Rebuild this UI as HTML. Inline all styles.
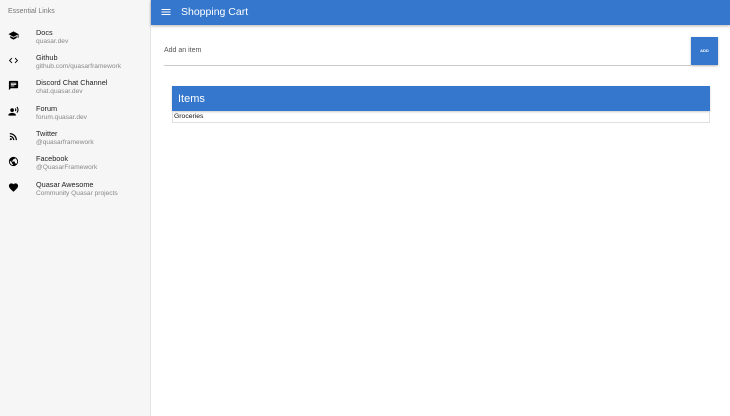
<!DOCTYPE html>
<html><head><style>
*{margin:0;padding:0;box-sizing:border-box}
body{width:730px;height:416px;overflow:hidden;font-family:"Liberation Sans",sans-serif;background:#fff;position:relative}
.side{position:absolute;left:0;top:0;width:151px;height:416px;background:#f6f6f6;border-right:1px solid #e4e4e4}
.hdr{position:absolute;left:8px;top:8px;font-size:7px;color:#777}
.it{position:absolute;left:0;height:25px;width:151px}
.it svg{position:absolute;left:8px;top:2px;width:11px;height:11px}
.t1{position:absolute;left:36px;top:0;font-size:7.3px;color:#222}
.t2{position:absolute;left:36px;top:10px;font-size:6.6px;color:#888}
.bar{position:absolute;left:151px;top:0;width:579px;height:25px;background:#3577cc;box-shadow:0 1px 3px rgba(0,0,0,.3)}
.bar .tt{position:absolute;left:30px;top:6px;color:#fff;font-size:10.5px}
.inp{position:absolute;left:164px;top:65px;width:527px;border-bottom:1px solid #ccc}
.ph{position:absolute;left:164px;top:47px;font-size:7px;color:#555}
.btn{position:absolute;left:691px;top:37px;width:27px;height:28px;background:#3577cc;box-shadow:0 1px 2px rgba(0,0,0,.3);color:#fff;font-size:4px;text-align:center;line-height:28px;font-weight:bold}
.ih{position:absolute;left:172px;top:86px;width:538px;height:25px;background:#3577cc;color:#fff;font-size:11px;padding:7px 6px;box-shadow:0 1px 2px rgba(0,0,0,.2)}
.row{position:absolute;left:172px;top:111px;width:538px;height:12px;border:1px solid #e0e0e0;border-top:none;font-size:6.8px;padding:2px 1px 0;color:#111}
</style></head><body>
<div class="side">
<div class="hdr">Essential Links</div>
<div class="it" style="top:28px"><svg viewBox="0 0 24 24"><path d="M5 13.2v4L12 21l7-3.8v-4L12 17l-7-3.8zM12 3 1 9l11 6 9-4.9V17h2V9L12 3z"/></svg><div class="t1">Docs</div><div class="t2">quasar.dev</div></div>
<div class="it" style="top:53px"><svg viewBox="0 0 24 24"><path d="M9.4 16.6 4.8 12l4.6-4.6L8 6l-6 6 6 6 1.4-1.4zm5.2 0 4.6-4.6-4.6-4.6L16 6l6 6-6 6-1.4-1.4z"/></svg><div class="t1">Github</div><div class="t2">github.com/quasarframework</div></div>
<div class="it" style="top:78px"><svg viewBox="0 0 24 24"><path d="M20 2H4c-1.1 0-2 .9-2 2v18l4-4h14c1.1 0 2-.9 2-2V4c0-1.1-.9-2-2-2zM6 9h12v2H6V9zm8 5H6v-2h8v2zm4-6H6V6h12v2z"/></svg><div class="t1">Discord Chat Channel</div><div class="t2">chat.quasar.dev</div></div>
<div class="it" style="top:104px"><svg viewBox="0 0 24 24"><circle cx="9" cy="9" r="4"/><path d="M9 15c-2.7 0-8 1.3-8 4v2h16v-2c0-2.7-5.3-4-8-4zm7.8-10.4-1.7 1.7c.8 1.2.8 2.6 0 3.8l1.7 1.7c2-2 2-5 0-7.2zM20.1 1.3l-1.6 1.6c2.8 3 2.8 7.5 0 10.7l1.6 1.6c3.9-3.800 3.9-9.8 0-13.9z"/></svg><div class="t1">Forum</div><div class="t2">forum.quasar.dev</div></div>
<div class="it" style="top:129px"><svg viewBox="0 0 24 24"><circle cx="6.2" cy="17.8" r="2.2"/><path d="M4 4.4v2.8c7 0 12.8 5.7 12.8 12.8h2.8C19.6 11.4 12.6 4.4 4 4.4zm0 5.7v2.8c3.9 0 7.1 3.2 7.1 7.1h2.8c0-5.5-4.4-9.9-9.9-9.9z"/></svg><div class="t1">Twitter</div><div class="t2">@quasarframework</div></div>
<div class="it" style="top:154px"><svg viewBox="0 0 24 24"><path d="M12 2C6.5 2 2 6.5 2 12s4.5 10 10 10 10-4.5 10-10S17.5 2 12 2zm-1 17.9c-4-.5-7-3.9-7-7.9 0-.6.1-1.2.2-1.8L9 15v1c0 1.1.9 2 2 2v1.9zm6.9-2.5c-.3-.8-1-1.4-1.9-1.4h-1v-3c0-.6-.4-1-1-1H8v-2h2c.6 0 1-.4 1-1V7h2c1.1 0 2-.9 2-2v-.4c2.9 1.2 5 4.1 5 7.4 0 2.1-.8 4-2.1 5.4z"/></svg><div class="t1">Facebook</div><div class="t2">@QuasarFramework</div></div>
<div class="it" style="top:180px"><svg viewBox="0 0 24 24"><path d="m12 21.4-1.5-1.3C5.4 15.4 2 12.3 2 8.5 2 5.4 4.4 3 7.5 3c1.7 0 3.4.8 4.5 2.1C13.1 3.8 14.8 3 16.5 3 19.6 3 22 5.4 22 8.5c0 3.8-3.4 6.9-8.5 11.5L12 21.4z"/></svg><div class="t1">Quasar Awesome</div><div class="t2">Community Quasar projects</div></div>
</div>
<div class="bar"><svg style="position:absolute;left:9px;top:6px" width="12" height="12" viewBox="0 0 24 24" fill="#fff"><path d="M3 18h18v-2H3v2zm0-5h18v-2H3v2zm0-7v2h18V6H3z"/></svg><div class="tt">Shopping Cart</div></div>
<div class="ph">Add an item</div>
<div class="inp"></div>
<div class="btn">ADD</div>
<div class="ih">Items</div>
<div class="row">Groceries</div>
</body></html>
